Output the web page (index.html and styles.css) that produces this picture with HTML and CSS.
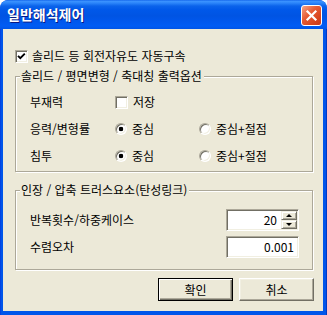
FILE: index.html
```html
<!DOCTYPE html>
<html lang="ko">
<head>
<meta charset="utf-8">
<title>일반해석제어</title>
<link rel="stylesheet" href="styles.css">
</head>
<body>
<div class="window">
  <div class="titlebar">
    <span class="title">일반해석제어</span>
    <span class="close">
      <svg width="19" height="19" viewBox="0 0 19 19"><path d="M5.5 5.5 L13.5 13.5 M13.5 5.5 L5.5 13.5" stroke="#fff" stroke-width="2.2" stroke-linecap="square" fill="none"/></svg>
    </span>
  </div>
  <div class="frame">
    <div class="client">
      <div class="top-check">
        <span class="cb"><svg width="11" height="11" viewBox="0 0 11 11"><path d="M2 4.8 L4.3 7.2 L8.8 2.6" stroke="#000" stroke-width="1.9" fill="none"/></svg></span>
        <span>솔리드 등 회전자유도 자동구속</span>
      </div>

      <div class="group g1">
        <span class="group-title">솔리드 / 평면변형 / 축대칭 출력옵션</span>
        <div class="rows">
          <span class="cell">부재력</span>
          <span class="cell"><span class="cb"></span>저장</span>
          <span class="cell"></span>

          <span class="cell">응력/변형률</span>
          <span class="cell"><span class="radio on"></span>중심</span>
          <span class="cell"><span class="radio"></span>중심+절점</span>

          <span class="cell">침투</span>
          <span class="cell"><span class="radio on"></span>중심</span>
          <span class="cell"><span class="radio"></span>중심+절점</span>
        </div>
      </div>

      <div class="group g2">
        <span class="group-title">인장 / 압축 트러스요소(탄성링크)</span>
        <div class="fields">
          <div class="field-row">
            <span>반복횟수/하중케이스</span>
            <div class="edit spin">
              <span class="val">20</span>
              <span class="spin-btns">
                <span class="sb up"></span>
                <span class="sb down"></span>
              </span>
            </div>
          </div>
          <div class="field-row">
            <span>수렴오차</span>
            <div class="edit"><span class="val">0.001</span></div>
          </div>
        </div>
      </div>

      <div class="buttons">
        <span class="btn default">확인</span>
        <span class="btn">취소</span>
      </div>
    </div>
  </div>
</div>
</body>
</html>
```
FILE: styles.css
```css
* { box-sizing: border-box; }
html, body { margin: 0; padding: 0; background: #ffffff; }
body {
  font-family: "Noto Sans CJK KR", "Noto Sans", sans-serif;
  font-size: 12px;
  color: #000;
}
.window {
  width: 327px;
  height: 315px;
  display: flex;
  flex-direction: column;
  border-radius: 8px 8px 0 0;
  overflow: hidden;
  background: #0055EA;
}
.titlebar {
  height: 29px;
  flex: none;
  display: flex;
  justify-content: space-between;
  align-items: flex-start;
  padding: 0 5px 0 7px;
  background: linear-gradient(180deg, #0A5AE6 0px, #3D95FF 1px, #2C86FA 3px, #0B63EB 6px, #0058E9 10px, #0054E3 16px, #0058EE 22px, #005CF4 26px, #0054E6 29px);
  border-radius: 8px 8px 0 0;
}
.title {
  margin-top: 6px;
  font-size: 14px;
  font-weight: bold;
  line-height: 17px;
  color: #fff;
  text-shadow: 1px 1px 0 #0A1883;
}
.close {
  margin-top: 5px;
  width: 21px;
  height: 21px;
  border: 1px solid #fff;
  border-radius: 3px;
  background: linear-gradient(135deg, #F4A487 0%, #E65C35 40%, #D8451E 75%, #C9391A 100%);
  display: flex;
  align-items: center;
  justify-content: center;
}
.close svg { display: block; }
.frame {
  flex: 1;
  display: flex;
  padding: 0 4px 4px 3px;
  background: linear-gradient(90deg, #0831D9 0, #0055EA 1px, #0055EA calc(100% - 1px), #001EA0 100%);
}
.client {
  flex: 1;
  display: flex;
  flex-direction: column;
  background: #ECE9D8;
}
.top-check {
  margin: 20px 0 0 12px;
  height: 14px;
  line-height: 14px;
  display: flex;
  align-items: center;
  gap: 4px;
}
.cb {
  width: 13px;
  height: 13px;
  flex: none;
  border: 1px solid;
  border-color: #ACA899 #FFFFFF #FFFFFF #ACA899;
  box-shadow: inset 1px 1px 0 #716F64, inset -1px -1px 0 #F1EFE2;
  background: #fff;
  display: flex;
  align-items: center;
  justify-content: center;
}
.cb svg { display: block; }
.radio {
  width: 12px;
  height: 12px;
  flex: none;
  border-radius: 50%;
  border: 1px solid;
  border-color: #ACA899 #FFFFFF #FFFFFF #ACA899;
  box-shadow: inset 1px 1px 0 #716F64, inset -1px -1px 0 #F1EFE2;
  background: #fff;
}
.radio.on {
  background: radial-gradient(circle at 50% 50%, #000 0, #000 2px, #fff 2.6px);
}
.group {
  margin-left: 12px;
  width: 298px;
  border: 1px solid #ACA899;
  box-shadow: 1px 1px 0 #fff, inset 1px 1px 0 #fff;
  display: flex;
  flex-direction: column;
}
.group-title {
  align-self: flex-start;
  margin: -8px 0 0 4px;
  padding: 0 2px 0 1px;
  height: 14px;
  line-height: 14px;
  background: #ECE9D8;
  white-space: nowrap;
}
.g1 { margin-top: 13px; padding-bottom: 8px; }
.rows {
  margin-top: 12px;
  padding-left: 14px;
  display: grid;
  grid-template-columns: 85px 84px 1fr;
  row-gap: 13px;
}
.cell {
  height: 14px;
  line-height: 14px;
  display: flex;
  align-items: center;
  gap: 5px;
  white-space: nowrap;
}
.g2 { margin-top: 18px; padding-bottom: 11px; }
.fields {
  margin-top: 12px;
  display: flex;
  flex-direction: column;
  gap: 5px;
}
.field-row {
  height: 22px;
  display: flex;
  align-items: center;
  justify-content: space-between;
  padding: 0 13px 0 14px;
  line-height: 14px;
}
.edit {
  width: 73px;
  height: 22px;
  border: 1px solid;
  border-color: #ACA899 #FFFFFF #FFFFFF #ACA899;
  box-shadow: inset 1px 1px 0 #716F64, inset -1px -1px 0 #F1EFE2;
  background: #fff;
  padding: 1px;
  display: flex;
  align-items: stretch;
}
.val {
  flex: 1;
  text-align: right;
  line-height: 18px;
  padding-right: 3px;
}
.spin .val { padding-right: 4px; }
.spin-btns {
  width: 16px;
  display: flex;
  flex-direction: column;
}
.sb {
  flex: 1;
  border: 1px solid;
  border-color: #F1EFE2 #716F64 #716F64 #F1EFE2;
  box-shadow: inset 1px 1px 0 #fff, inset -1px -1px 0 #ACA899;
  background: #ECE9D8;
  display: flex;
  align-items: center;
  justify-content: center;
}
.sb::before {
  content: "";
  width: 0;
  height: 0;
  border-left: 3px solid transparent;
  border-right: 3px solid transparent;
}
.sb.up::before { border-bottom: 3px solid #000; }
.sb.down::before { border-top: 3px solid #000; }
.buttons {
  margin-top: 8px;
  display: flex;
  justify-content: flex-end;
  gap: 6px;
  padding-right: 9px;
}
.btn {
  width: 75px;
  height: 23px;
  display: flex;
  align-items: center;
  justify-content: center;
  line-height: 14px;
  background: #ECE9D8;
  border: 1px solid;
  border-color: #FFFFFF #716F64 #716F64 #FFFFFF;
  box-shadow: inset -1px -1px 0 #ACA899, inset 1px 1px 0 #F1EFE2;
}
.btn.default {
  border-color: #000;
  box-shadow: inset 1px 1px 0 #fff, inset -1px -1px 0 #716F64, inset -2px -2px 0 #ACA899;
}
```
